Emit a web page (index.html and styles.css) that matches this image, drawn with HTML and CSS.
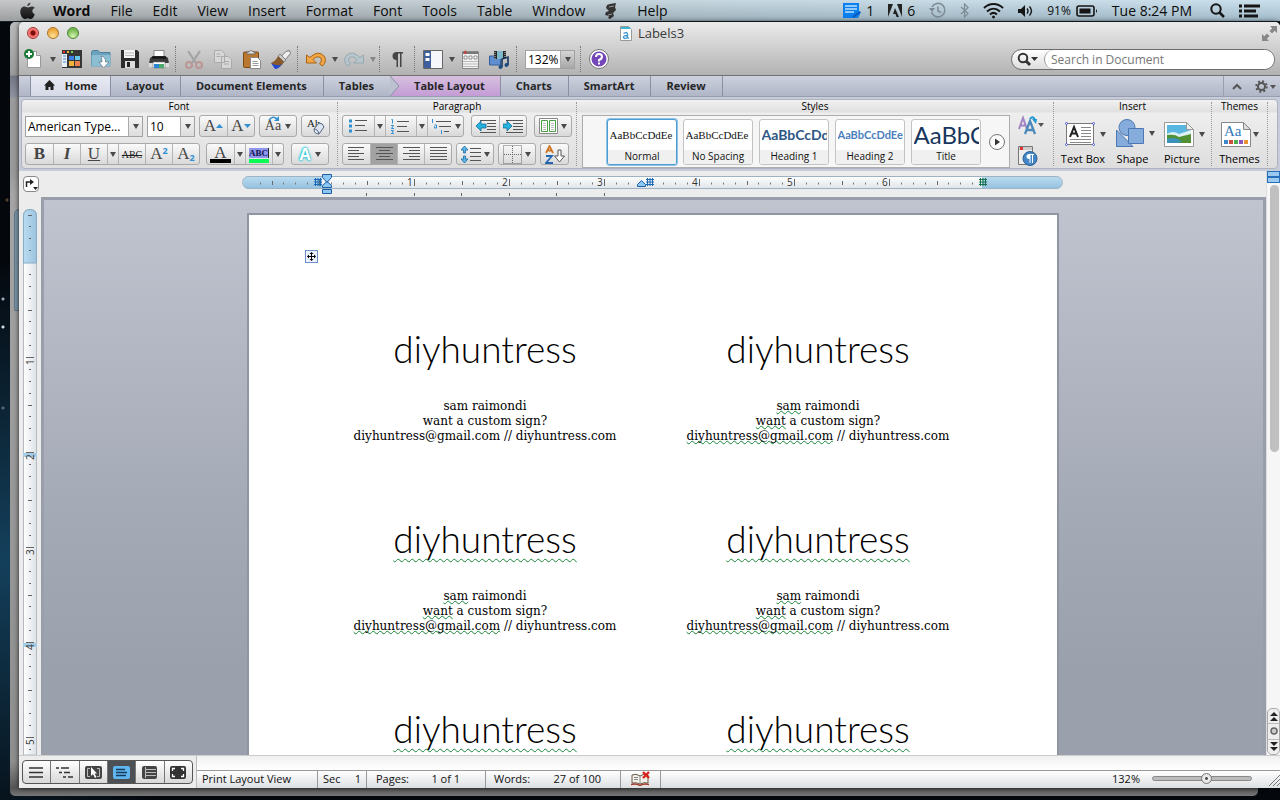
FILE: index.html
```html
<!DOCTYPE html>
<html lang="en">
<head>
<meta charset="utf-8">
<title>Labels3</title>
<link rel="stylesheet" href="styles.css">
</head>
<body>
<svg class="defs" aria-hidden="true">
  <symbol id="down" viewBox="0 0 6 5"><path d="M0 0h6L3 5z" fill="#4a4a4a"/></symbol>
  <symbol id="hash" viewBox="0 0 8 8"><path d="M1.500 0v8M4 0v8M6.500 0v8M0 1.500h8M0 4h8M0 6.500h8" stroke="currentColor" stroke-width="1"/></symbol>
</svg>

<header class="menubar">
  <svg class="apple" width="17" height="18" viewBox="0 0 17 18"><defs><linearGradient id="ap" x2="0" y2="1"><stop stop-color="#444"/><stop offset="1" stop-color="#111"/></linearGradient></defs><path fill="url(#ap)" d="M11.500.5c.1 1.700-1.400 3.500-3.200 3.600C8.100 2.400 9.800.7 11.500.5zM15 6.300c-2.600 1.500-2 4.800.8 5.900-.7 2-2.100 4.800-3.900 4.800-1.200 0-1.600-.8-3-.8s-1.900.8-3.100.8C3.500 17 1.300 13.200 1.300 9.800c0-3.400 2.200-5.200 4.300-5.200 1.400 0 2.300.8 3.500.8 1.100 0 2-.9 3.800-.9 1 0 2.100.5 2.900 1.500z"/></svg>
  <nav class="menus">
    <button class="app">Word</button><button>File</button><button>Edit</button><button>View</button><button>Insert</button><button>Format</button><button>Font</button><button>Tools</button><button>Table</button><button>Window</button>
    <button aria-label="Scripts"><svg width="12" height="16" viewBox="0 0 12 16"><path d="M5 1l6-1-1 4 1 3-3 3 1 3-4 3-2-1 1-2-4-1 1-3 3-1-3-3 1-3z" fill="#333"/><path d="M4 4l5-1M3 12l4-1" stroke="#999"/></svg></button>
    <button>Help</button>
  </nav>
  <div class="tray">
    <span class="stat"><svg width="18" height="17" viewBox="0 0 18 17"><path d="M0 1h16v8l2 1-3 6H0z" fill="#0a7ff0"/><path d="M2 4h12M2 7h12M2 10h9" stroke="#bfe2ff" stroke-width="1.500"/><path d="M10 15l7-5" stroke="#0a57b8" stroke-width="2"/></svg>1</span>
    <span class="stat"><svg width="14" height="14" viewBox="0 0 14 14"><path d="M0 0h5L0 13zM9 0h5v13zM7 4l4 9H8.500L7.500 10H5z" fill="#222"/></svg>6</span>
    <svg width="17" height="17" viewBox="0 0 17 17" fill="none" stroke="#7d8b93" stroke-width="1.500"><path d="M3 5a6.800 6.800 0 1 1-.5 5M9 4.500V9l3 1.500"/><path d="M0 6l3 4 3-4z" fill="#7d8b93" stroke="none"/></svg>
    <svg width="9" height="15" viewBox="0 0 9 15" fill="none" stroke="#7d8b93" stroke-width="1.200"><path d="M1 4l7 6.500L4.500 14V1L8 4.500 1 11"/></svg>
    <svg width="21" height="17" viewBox="0 0 21 17" fill="none" stroke="#151515" stroke-width="2"><path d="M1 6c5.500-5.300 13.500-5.300 19 0M4 9.500c4-3.800 9-3.800 13 0M7 12.500c2.200-2 4.800-2 7 0"/><circle cx="10.500" cy="15" r="1" fill="#151515" stroke-width="1"/></svg>
    <svg width="15" height="12" viewBox="0 0 15 12"><path d="M0 4h3l4-4v12L3 8H0z" fill="#151515"/><path d="M9 3.500q2 2.500 0 5M11.500 1.500q4 4.500 0 9" fill="none" stroke="#151515" stroke-width="1.400"/></svg>
    <span class="stat batt">91%<svg width="22" height="12" viewBox="0 0 22 12"><rect x="1" y="1" width="17" height="10" rx="2" fill="none" stroke="#151515" stroke-width="1.600"/><path d="M3.500 3.500h11v5h-11zM20 4q2 2 0 4z" fill="#151515"/></svg></span>
    <span class="clock">Tue 8:24 PM</span>
    <svg width="15" height="15" viewBox="0 0 15 15" fill="none" stroke="#151515" stroke-width="2"><circle cx="6" cy="6" r="4.700"/><path d="M9.500 9.500L14 14" stroke-width="2.500"/></svg>
    <svg width="21" height="14" viewBox="0 0 21 14" stroke="#151515" stroke-width="3"><path d="M0 2h3M5 2h16M0 7h3M5 7h12M0 12h3M5 12h14"/></svg>
  </div>
</header>

<div class="back-window" aria-hidden="true"><div class="back-ruler"></div></div>

<main class="window">
  <div class="chrome">
    <div class="titlebar">
      <div class="lights"><button class="light red" aria-label="Close"></button><button class="light amber" aria-label="Minimize"></button><button class="light green" aria-label="Zoom"></button></div>
      <h1 class="title"><svg width="12" height="15" viewBox="0 0 12 15"><path d="M.5.500h8l3 3v11H.5z" fill="#fff" stroke="#999"/><path d="M1 1h8l2 2H1z" fill="#3bb5cf"/><path d="M3.500 7.500q4-2 4 1v4M7.500 9.500q-4.500 0-4 2 .8 2 4 0l1.500 1" fill="none" stroke="#3a94cc" stroke-width="1.300"/></svg>Labels3</h1>
      <button class="full" aria-label="Full screen"><svg width="15" height="15" viewBox="0 0 15 15"><path d="M8 0h7v7l-2.300-2.300L10 7.500 7.500 5l2.700-2.700zM0 15V8l2.300 2.300L5 7.500 7.500 10l-2.700 2.700L7 15z" fill="#888"/></svg></button>
    </div>
    <div class="toolbar">
      <button class="tool" aria-label="New"><svg width="19" height="20" viewBox="0 0 19 20"><path d="M3.500 2.500h9l4 4v12h-13z" fill="#fff" stroke="#999"/><path d="M12.500 2.500v4h4" fill="#ddd" stroke="#999"/><circle cx="5" cy="5" r="5" fill="#187a35"/><path d="M5 2v6M2 5h6" stroke="#fff" stroke-width="2"/></svg></button><button class="drop" aria-label="New options"><svg width="6" height="5"><use href="#down"/></svg></button>
      <button class="tool" aria-label="Gallery"><svg width="20" height="19" viewBox="0 0 20 19"><path d="M0 0h20v18H0z" fill="#363636"/><path d="M0 4h5v13H0z" fill="#e8eef6"/><path d="M1 6h3M1 9h3M1 12h3" stroke="#4d87c8"/><path d="M1 1h2v2H1z" fill="#e33"/><path d="M5 1h2v2H5z" fill="#e9b83a"/><path d="M9 1h2v2H9z" fill="#7bd24a"/><path d="M7 6h5v4H7z" fill="#3b7fe8"/><path d="M13 6h5v4h-5z" fill="#67c8e8"/><path d="M7 11h5v5H7z" fill="#f0b43a"/><path d="M13 11h5v5h-5z" fill="#e98252"/></svg></button>
      <button class="tool" aria-label="Open"><svg width="20" height="19" viewBox="0 0 20 19"><path d="M.5 2.500q0-2 2-2H7l2 2h10V16H.5z" fill="#6ba3be" stroke="#4c8099"/><path d="M.5 5h19v11.500H.5z" fill="#8bbdd3"/><path d="M10 6q5 1 4.500 6H18l-5.500 6L8 12h3q0-4-1-6z" fill="#fff" stroke="#567" stroke-width=".6"/></svg></button>
      <button class="tool" aria-label="Save"><svg width="18" height="18" viewBox="0 0 18 18"><path d="M0 0h16l2 2v16H0z" fill="#2c2c2c"/><path d="M3 0h11v8H3z" fill="#f4f4f4"/><path d="M4 3h9M4 5.500h9" stroke="#bbb"/><path d="M4 11h10v7H4z" fill="#ddd"/><path d="M6 12h3v5H6z" fill="#222"/></svg></button>
      <button class="tool" aria-label="Print"><svg width="20" height="19" viewBox="0 0 20 19"><path d="M5 .5h10V8H5z" fill="#fff" stroke="#888"/><path d="M1 8l3-2h12l3 2 1 6H0z" fill="#3b3b3b"/><path d="M0 13h20v4H0z" fill="#ddd"/><path d="M3 7.500h14" stroke="#111" stroke-width="2"/><path d="M4 12h12v6H4z" fill="#fff" stroke="#777" stroke-width=".6"/><path d="M5 14h5v4H5z" fill="#2a86d0"/><path d="M10 14h5v4h-5z" fill="#4cab6b"/></svg></button>
      <i class="sep"></i>
      <button class="tool" aria-label="Cut" disabled><svg width="18" height="19" viewBox="0 0 18 19" fill="none"><path d="M3 1l8 12M15 1L7 13" stroke="#999" stroke-width="2"/><circle cx="4" cy="15" r="3" stroke="#bb8d8a" stroke-width="2"/><circle cx="14" cy="15" r="3" stroke="#bb8d8a" stroke-width="2"/></svg></button>
      <button class="tool" aria-label="Copy" disabled><svg width="18" height="19" viewBox="0 0 18 19" fill="#ddd" stroke="#a5a5a5"><path d="M.5.500h7l3 3v9H.5zM7.500 6.500h7l3 3v9h-10z"/><path d="M2.500 4h4M2.500 6.500h4M10 11.500h5M10 14h5" /></svg></button>
      <button class="tool" aria-label="Paste"><svg width="18" height="19" viewBox="0 0 18 19"><rect x=".5" y="2" width="15" height="15.500" rx="1" fill="#b9772f" stroke="#7c4a14"/><path d="M4 4V2h2q2-4 4 0h2v2z" fill="#ddd" stroke="#666" stroke-width=".8"/><path d="M7.500 7.500h7l3 3v8h-10z" fill="#fff" stroke="#888"/><path d="M9.500 11.500h5M9.500 13.500h6M9.500 15.500h6" stroke="#999"/></svg></button>
      <button class="tool" aria-label="Format painter"><svg width="20" height="19" viewBox="0 0 20 19"><path d="M15 1.500l3.500-1 1 3-5 6-4-3.500z" fill="#eee" stroke="#777"/><path d="M9 4l6 6-2 2-6-6z" fill="#ccc" stroke="#666" stroke-width=".7"/><path d="M7 6l6 6q-2 4-7 6l-6-5q5-2 7-7z" fill="#8a5a2c"/><path d="M0 13q7 4 11 1-3 5-7 5z" fill="#2447d0"/></svg></button>
      <i class="sep"></i>
      <button class="tool" aria-label="Undo"><svg width="20" height="15" viewBox="0 0 20 15"><path d="M.5 3L4 5.500Q12-2.500 18 4q3.500 5-1.500 10l-3-2q3-3 1.500-6-4-3-8 1.500L10.500 11H.5z" fill="#f1a545" stroke="#a86415"/></svg></button><button class="drop" aria-label="Undo options"><svg width="6" height="5"><use href="#down"/></svg></button>
      <button class="tool" aria-label="Redo" disabled><svg width="20" height="15" viewBox="0 0 20 15"><path d="M19.500 3L16 5.500Q8-2.500 2 4q-3.500 5 1.500 10l3-2q-3-3-1.500-6 4-3 8 1.500L9.500 11h10z" fill="#b4c8d0" stroke="#8ba3ad"/></svg></button><button class="drop dim" aria-label="Redo options" disabled><svg width="6" height="5"><use href="#down"/></svg></button>
      <i class="sep"></i>
      <button class="tool" aria-label="Show formatting"><svg width="11" height="15" viewBox="0 0 11 15"><path d="M4.500 8Q.5 8 .5 4T5 0h6v1.500H9.500V15H8V1.500H6V15H4.500z" fill="#454545"/></svg></button>
      <i class="sep"></i>
      <button class="tool" aria-label="Sidebar"><svg width="20" height="19" viewBox="0 0 20 19"><path d="M.5.500h19v18H.5z" fill="#f5f7fa" stroke="#666"/><path d="M1 1h7v17H1z" fill="#3f5e9c"/><path d="M2.500 3h4v3h-4zM2.500 8h4v3h-4z" fill="#fff"/></svg></button><button class="drop" aria-label="Sidebar options"><svg width="6" height="5"><use href="#down"/></svg></button>
      <button class="tool" aria-label="Toolbox"><svg width="17" height="19" viewBox="0 0 17 19"><path d="M.5 1.500h16v17H.5z" fill="#f2f2f2" stroke="#888"/><path d="M1 2h15v2H1z" fill="#777"/><path d="M3 0l2 3-3 1z" fill="#d33"/><path d="M2 6h3v3H2zM7 6h3v3H7zM12 6h3v3h-3z" fill="#fff" stroke="#777" stroke-width=".8"/><path d="M1 11.500h15M1 14h15M1 16.500h15" stroke="#bbb"/></svg></button>
      <button class="tool" aria-label="Media browser"><svg width="21" height="19" viewBox="0 0 21 19"><path d="M.5 6h11v9H.5z" fill="#5f8fd0" stroke="#345e9c"/><path d="M5 1h12v8H5z" fill="#252525"/><path d="M8 1h6v8H8z" fill="#7fb8ca"/><path d="M6 2v7M16 2v7" stroke="#ddd" stroke-dasharray="1 1"/><path d="M13 17V9l6-2v8" fill="none" stroke="#16365c" stroke-width="1.600"/><circle cx="11.500" cy="17" r="2" fill="#1f4a80"/><circle cx="17.500" cy="15" r="2" fill="#1f4a80"/></svg></button>
      <i class="sep"></i>
      <span class="combo zoom"><select aria-label="Zoom"><option>132%</option></select><span class="arrow"><svg width="6" height="5"><use href="#down"/></svg></span></span>
      <i class="sep"></i>
      <button class="tool" aria-label="Help"><svg width="20" height="20" viewBox="0 0 20 20"><circle cx="10" cy="10" r="8.500" fill="#7546b8" stroke="#fff" stroke-width="2"/><circle cx="10" cy="10" r="9.500" fill="none" stroke="#777"/><path d="M7 8q0-3 3-3t3 2.500-3 3.500v1.500M10 13.500v2" fill="none" stroke="#fff" stroke-width="2"/></svg></button>
      <label class="search"><svg width="21" height="15" viewBox="0 0 21 15" fill="none" stroke="#333" stroke-width="2"><circle cx="6" cy="6" r="4.300"/><path d="M9 9l4 4" stroke-width="3"/><path d="M14 5h7l-3.500 4z" fill="#333" stroke="none"/></svg><input type="text" placeholder="Search in Document" aria-label="Search in Document"></label>
    </div>
  </div>

  <nav class="tabs">
    <button class="tab home"><svg width="11" height="10" viewBox="0 0 11 10"><path d="M5.500 0L11 5.500H9.500V10h-3V7h-2v3h-3V5.500H0z" fill="#222"/></svg>Home</button>
    <button class="tab">Layout</button><button class="tab">Document Elements</button><button class="tab tables">Tables</button>
    <button class="tab context"><svg class="notch" width="11" height="20" viewBox="0 0 11 20"><path d="M0 0l9 10-9 10z" fill="#bcc1d0"/><path d="M0 0l9 10-9 10" fill="none" stroke="#8b8fa3"/></svg>Table Layout</button>
    <button class="tab">Charts</button><button class="tab">SmartArt</button><button class="tab">Review</button>
    <div class="tab-tools"><button aria-label="Collapse ribbon"><svg width="10" height="7" viewBox="0 0 10 7"><path d="M1 6l4-4 4 4" fill="none" stroke="#555" stroke-width="2"/></svg></button><button aria-label="Ribbon settings"><svg width="21" height="13" viewBox="0 0 21 13"><circle cx="6.500" cy="6.500" r="3.500" fill="none" stroke="#555" stroke-width="2"/><circle cx="6.500" cy="6.500" r="5.200" fill="none" stroke="#555" stroke-width="2" stroke-dasharray="2 2.080"/><path d="M15 5h6l-3 4z" fill="#555"/></svg></button></div>
  </nav>

  <section class="ribbon">
    <div class="panel">
      <div class="group font">
        <h2>Font</h2>
        <div class="row">
          <span class="combo family"><select aria-label="Font family"><option>American Type...</option></select><span class="arrow"><svg width="6" height="5"><use href="#down"/></svg></span></span>
          <span class="combo size"><select aria-label="Font size"><option>10</option></select><span class="arrow"><svg width="6" height="5"><use href="#down"/></svg></span></span>
          <span class="set"><button class="c28 serif" aria-label="Grow font">A<svg width="7" height="4" viewBox="0 0 7 4"><path d="M0 4h7L3.500 0z" fill="#2f8fd0"/></svg></button><button class="c28 serif" aria-label="Shrink font">A<svg width="7" height="4" viewBox="0 0 7 4"><path d="M0 0h7L3.500 4z" fill="#2f8fd0"/></svg></button></span>
          <span class="set"><button class="c38 serif" aria-label="Change case"><span class="case">Aa<svg class="swirl" width="12" height="5" viewBox="0 0 12 5"><path d="M1 4q4-5 8-1" fill="none" stroke="#2f8fd0" stroke-width="1.500"/><path d="M11 0v5H6z" fill="#2f8fd0"/></svg></span><svg width="6" height="5"><use href="#down"/></svg></button></span>
          <span class="set"><button class="c28" aria-label="Clear formatting"><svg width="18" height="19" viewBox="0 0 18 19"><text x="0" y="10" font-size="11" font-family="Liberation Serif" fill="#222">Ab</text><path d="M7 12l5-6q4 0 5 4l-5 7q-5 0-5-5z" fill="#dce4f2" stroke="#55657d"/><path d="M7 12q4 0 5 5" fill="none" stroke="#55657d"/></svg></button></span>
        </div>
        <div class="row">
          <span class="set"><button class="c28 serif bold">B</button><button class="c28 serif ital">I</button><button class="c28 serif under">U</button><button class="c11" aria-label="Underline options"><svg width="6" height="5"><use href="#down"/></svg></button><button class="c28 strike">ABC</button><button class="c28 serif">A<sup>2</sup></button><button class="c28 serif">A<sub>2</sub></button></span>
          <span class="set gap"><button class="c28 serif ink black">A</button><button class="c11" aria-label="Font color options"><svg width="6" height="5"><use href="#down"/></svg></button><button class="c28 ink lime"><span class="hl">ABC</span></button><button class="c11" aria-label="Highlight options"><svg width="6" height="5"><use href="#down"/></svg></button></span>
          <span class="set glowset"><button class="c38 glow"><b>A</b><svg width="6" height="5"><use href="#down"/></svg></button></span>
        </div>
      </div>

      <div class="group para">
        <h2>Paragraph</h2>
        <div class="row">
          <span class="set">
            <button class="c32" aria-label="Bullets"><svg width="20" height="14" viewBox="0 0 20 14"><path d="M0 2h3M0 7h3M0 12h3" stroke="#2f8fd0" stroke-width="3"/><path d="M6 1.500h12M6 6.500h10M6 11.500h12" stroke="#555"/></svg></button><button class="c11" aria-label="Bullet options"><svg width="6" height="5"><use href="#down"/></svg></button>
            <button class="c32" aria-label="Numbering"><svg width="20" height="15" viewBox="0 0 20 15"><path d="M.5.500h1v4M0 6.500h2.500L.5 9.500H3M0 11.500h2.500l-1 1.500 1 1.500H0" fill="none" stroke="#2f8fd0"/><path d="M6 2.500h12M6 7.500h10M6 12.500h12" stroke="#555"/></svg></button><button class="c11" aria-label="Numbering options"><svg width="6" height="5"><use href="#down"/></svg></button>
            <button class="c38" aria-label="Multilevel list"><svg width="21" height="15" viewBox="0 0 21 15"><path d="M1.500 0v4M3.500 6h2v3h-2V7.500M10.500 11v4" fill="none" stroke="#2f8fd0"/><path d="M5 2.500h15M8 7.500h12M13 12.500h5" stroke="#555"/></svg><svg width="6" height="5"><use href="#down"/></svg></button>
          </span>
          <span class="set gap"><button class="c28" aria-label="Decrease indent"><svg width="20" height="14" viewBox="0 0 20 14"><path d="M4 1.500h16M11 4.500h9M11 7.500h9M11 10.500h9M4 13.500h16" stroke="#555"/><path d="M0 7l5-5v3h5v4H5v3z" fill="#25b4dd" stroke="#116b99" stroke-width=".8"/></svg></button><button class="c28" aria-label="Increase indent"><svg width="20" height="14" viewBox="0 0 20 14"><path d="M3 1.500h17M10 4.500h10M10 7.500h10M10 10.500h10M3 13.500h17" stroke="#555"/><path d="M9 7L4 2v3H0v4h4v3z" fill="#25b4dd" stroke="#116b99" stroke-width=".8"/></svg></button></span>
          <span class="set gap"><button class="c38" aria-label="Columns"><svg width="19" height="16" viewBox="0 0 19 16"><path d="M.5.500h18v15H.5z" fill="#fff" stroke="#888"/><path d="M2.500 2.500h6v11h-6zM10.500 2.500h6v11h-6z" fill="#fff" stroke="#45a045"/><path d="M4 5.500h3M4 7.500h3M4 9.500h3M4 11.500h3M12 5.500h3M12 7.500h3M12 9.500h3M12 11.500h3" stroke="#bbb"/></svg><svg width="6" height="5"><use href="#down"/></svg></button></span>
        </div>
        <div class="row">
          <span class="set"><button class="c28" aria-label="Align left"><svg width="17" height="14" viewBox="0 0 17 14"><path d="M0 .5h16M0 3.500h11M0 6.500h16M0 9.500h11M0 12.500h16" stroke="#555"/></svg></button><button class="c28 on" aria-label="Center"><svg width="17" height="14" viewBox="0 0 17 14"><path d="M0 .5h17M3 3.500h11M0 6.500h17M3 9.500h11M0 12.500h17" stroke="#555"/></svg></button><button class="c28" aria-label="Align right"><svg width="17" height="14" viewBox="0 0 17 14"><path d="M0 .5h17M6 3.500h11M0 6.500h17M6 9.500h11M0 12.500h17" stroke="#555"/></svg></button><button class="c28" aria-label="Justify"><svg width="17" height="14" viewBox="0 0 17 14"><path d="M0 .5h17M0 3.500h17M0 6.500h17M0 9.500h17M0 12.500h17" stroke="#555"/></svg></button></span>
          <span class="set"><button class="c38" aria-label="Line spacing"><svg width="20" height="17" viewBox="0 0 20 17"><path d="M9 2.500h11M9 6.500h11M9 10.500h11M9 14.500h11" stroke="#555"/><path d="M3.500 0L7 4H4.500v3h-2V4H0zM3.500 17L7 13H4.500v-3h-2v3H0z" fill="#5db4e5" stroke="#1b6ca5" stroke-width=".8"/></svg><svg width="6" height="5"><use href="#down"/></svg></button></span>
          <span class="set"><button class="c38" aria-label="Borders"><svg width="19" height="19" viewBox="0 0 19 19"><path d="M.5.500h18v18H.5zM9.500 1v17M1 9.500h17" fill="none" stroke="#666" stroke-dasharray="1 1"/></svg><svg width="6" height="5"><use href="#down"/></svg></button></span>
          <span class="set"><button class="c28" aria-label="Sort"><svg width="20" height="19" viewBox="0 0 20 19"><path d="M1 8l3.500-7L8 8M2.500 5.500h4" fill="none" stroke="#cf7828" stroke-width="1.800"/><path d="M1 11h6l-6 7h7" fill="none" stroke="#2467b0" stroke-width="1.800"/><path d="M13 5h3v6h3.500L14.500 17l-5-6H13z" fill="#fff" stroke="#555"/></svg></button></span>
        </div>
      </div>

      <div class="group styles">
        <h2>Styles</h2>
        <div class="styles-body">
          <div class="gallery">
            <button class="style chosen"><span class="demo normal">AaBbCcDdEe</span><span class="name">Normal</span></button>
            <button class="style"><span class="demo normal">AaBbCcDdEe</span><span class="name">No Spacing</span></button>
            <button class="style"><span class="demo h1">AaBbCcDd</span><span class="name">Heading 1</span></button>
            <button class="style"><span class="demo h2">AaBbCcDdEe</span><span class="name">Heading 2</span></button>
            <button class="style"><span class="demo ttl">AaBbC</span><span class="name">Title</span></button>
            <button class="play" aria-label="More styles"><svg width="16" height="16" viewBox="0 0 16 16"><circle cx="8" cy="8" r="7.500" fill="#fcfcfc" stroke="#777"/><path d="M6 4.500v7L11 8z" fill="#333"/></svg></button>
          </div>
          <div class="style-tools">
            <button aria-label="Change styles"><svg width="26" height="20" viewBox="0 0 26 20"><path d="M1 14L5 3l4 11M2.500 10.500h5" fill="none" stroke="#a283c4" stroke-width="2"/><path d="M7 19L12 6l5 13M8.500 15h7" fill="none" stroke="#4d88bb" stroke-width="2.300"/><path d="M12 4q3-4 5 1" fill="none" stroke="#2097d2" stroke-width="2"/><path d="M14 4h5l-1 5z" fill="#2097d2"/><path d="M20 8h6l-3 4z" fill="#555"/></svg></button>
            <button aria-label="Styles pane"><svg width="20" height="20" viewBox="0 0 20 20"><path d="M.5.500h14v18H.5z" fill="#eee" stroke="#777"/><path d="M1 1h13v3H1z" fill="#ccc"/><path d="M2 1h3v3H2z" fill="#d33"/><circle cx="12" cy="12.500" r="7" fill="#4286c6" stroke="#2c5f94"/><path d="M11.500 13q-3 0-3-2.500t3-2.500H16v1h-1v8h-1V9h-1.500v8h-1z" fill="#fff"/></svg></button>
          </div>
        </div>
      </div>

      <div class="group insert">
        <h2>Insert</h2>
        <div class="bigs">
          <button class="big"><span><svg width="30" height="25" viewBox="0 0 30 25"><path d="M1.500 1.500h27v21h-27z" fill="#fff" stroke="#777"/><path d="M5 15L9 5l4 10M6.500 11.500h5" fill="none" stroke="#222" stroke-width="2"/><path d="M16 5.500h10M16 8.500h10M16 11.500h10M16 14.500h10M5 17.500h21M5 20.500h21" stroke="#888"/><g fill="#fff" stroke="#4358e0"><circle cx="1.500" cy="1.500" r="1"/><circle cx="28.500" cy="1.500" r="1"/><circle cx="1.500" cy="22.500" r="1"/><circle cx="28.500" cy="22.500" r="1"/></g></svg><svg width="6" height="5"><use href="#down"/></svg></span>Text Box</button>
          <button class="big"><span><svg width="29" height="28" viewBox="0 0 29 28" fill="#86acdb" stroke="#4b77b2"><circle cx="12" cy="8.500" r="8"/><path d="M1.500 11v16.500H18z"/><path d="M13.500 9.500h15v15h-15z"/></svg><svg width="6" height="5"><use href="#down"/></svg></span>Shape</button>
          <button class="big"><span><svg width="30" height="25" viewBox="0 0 30 25"><path d="M.5.500h22l7 7v17H.5z" fill="#fff" stroke="#999"/><path d="M3 3h20l4 5v13H3z" fill="#58b6e0"/><path d="M3 12q6-4 12 0l12-4v5l-10 4H3z" fill="#dcf0ee"/><path d="M3 13q8-1 12 2l12-3v9H3z" fill="#4f9134"/><path d="M3 17q9-3 15 3l-5 1H3z" fill="#3b92b9"/><path d="M22.500.5v7h7z" fill="#eee" stroke="#999"/></svg><svg width="6" height="5"><use href="#down"/></svg></span>Picture</button>
        </div>
      </div>

      <div class="group themes">
        <h2>Themes</h2>
        <div class="bigs">
          <button class="big"><span><svg width="30" height="25" viewBox="0 0 30 25"><path d="M.5.500h22l7 7v17H.5z" fill="#fff" stroke="#888"/><path d="M22.500.5v7h7z" fill="#ddd" stroke="#888"/><text x="3" y="14" font-size="15" font-family="Liberation Serif" fill="#3478b8">Aa</text><path d="M3 18h4v4H3z" fill="#3f86c8"/><path d="M8 18h4v4H8z" fill="#c8503f"/><path d="M13 18h4v4h-4z" fill="#4fae50"/><path d="M18 18h4v4h-4z" fill="#8b54bd"/><path d="M23 18h4v4h-4z" fill="#e89236"/></svg><svg width="6" height="5"><use href="#down"/></svg></span>Themes</button>
        </div>
      </div>
      <div class="group end"></div>
    </div>
  </section>

  <section class="work">
    <button class="tabstop" aria-label="Tab stop"><svg width="14" height="14" viewBox="0 0 14 14"><path d="M2.500 10V5H7" fill="none" stroke="#222" stroke-width="1.500"/><path d="M6 2l4 3-4 3zM9 10h5l-2.500 3z" fill="#222"/></svg></button>
    <div class="hruler">
      <svg width="821" height="26" viewBox="0 0 821 26">
        <defs>
          <linearGradient id="hg" x2="0" y2="1"><stop stop-color="#fff"/><stop offset="1" stop-color="#dfe4e8"/></linearGradient>
          <linearGradient id="hb" x2="0" y2="1"><stop stop-color="#bcdcf0"/><stop offset="1" stop-color="#93c0df"/></linearGradient>
          <pattern id="ht" x="77" width="95" height="13" y="5" patternUnits="userSpaceOnUse"><path d="M.5 3v7M48.500 5v4" stroke="#666"/><path d="M12 7.500h1M24 7.500h1M36 7.500h1M59 7.500h1M71 7.500h1M83 7.500h1" stroke="#777" stroke-width="2"/></pattern>
          <clipPath id="hc"><rect x="1" y="5" width="819" height="13" rx="6"/></clipPath>
        </defs>
        <g clip-path="url(#hc)"><path d="M0 5h821v13H0z" fill="url(#hg)"/><path d="M0 5h80v13H0zM740 5h81v13h-81z" fill="url(#hb)"/></g>
        <path d="M8 5h728v13H8z" fill="url(#ht)"/>
        <rect x=".5" y="5.500" width="820" height="12" rx="6" fill="none" stroke="#9db3c4"/>
        <g class="nums"><text x="165" y="15">1</text><text x="260" y="15">2</text><text x="355" y="15">3</text><text x="450" y="15">4</text><text x="545" y="15">5</text><text x="640" y="15">6</text></g>
        <path d="M124.500 22v3M172.500 22v3M219.500 22v3M267.500 22v3M314.500 22v3M362.500 22v3" stroke="#666"/>
        <g fill="#8cc8f2" stroke="#1d5ea6"><path d="M80.500 3.500h9v3l-4.500 5-4.500-5zM80.500 16.500v-2l4.500-4 4.500 4v2zM80.500 18.500h9v4h-9z"/><path d="M395.500 15.500v-2l4-4 4 4v2z"/></g>
        <g color="#1b69b4"><use href="#hash" x="72" y="7" width="8" height="8"/><use href="#hash" x="404" y="7" width="8" height="8"/></g><g color="#17724f"><use href="#hash" x="737" y="7" width="8" height="8"/></g>
      </svg>
    </div>
    <div class="vscroll"><div class="split"></div><div class="track"><div class="thumb"></div></div>
      <div class="pager"><button aria-label="Previous page"><svg width="8" height="9" viewBox="0 0 8 9"><path d="M0 4h8L4 0zM0 9h8L4 5z" fill="#222"/></svg></button><button aria-label="Browse object"><svg width="8" height="8" viewBox="0 0 8 8"><circle cx="4" cy="4" r="3" fill="#ccc" stroke="#666" stroke-width="1.500"/></svg></button><button aria-label="Next page"><svg width="8" height="9" viewBox="0 0 8 9"><path d="M0 0h8L4 4zM0 5h8L4 9z" fill="#222"/></svg></button></div>
    </div>
    <div class="vruler">
      <svg width="14" height="546">
        <defs>
          <linearGradient id="vg"><stop stop-color="#fff"/><stop offset="1" stop-color="#dde2e6"/></linearGradient>
          <linearGradient id="vb"><stop stop-color="#b9dcf2"/><stop offset="1" stop-color="#9cc3dd"/></linearGradient>
          <pattern id="vt" y="53" width="14" height="95" patternUnits="userSpaceOnUse"><path d="M3 .5h8M5 48.500h4" stroke="#666"/><path d="M6 12.500h2M6 24.500h2M6 36.500h2M6 59.500h2M6 71.500h2M6 83.500h2" stroke="#666"/></pattern>
        </defs>
        <path d="M.5 546V7q0-6.500 6.500-6.500T13.500 7v539z" fill="url(#vg)" stroke="#b4bac0"/>
        <path d="M.5 54V7q0-6.500 6.500-6.500T13.500 7v47z" fill="url(#vb)" stroke="#86acc6"/>
        <path d="M0 244h14v4H0zM0 434h14v4H0z" fill="#a5cde8"/>
        <path d="M0 4h14v48H0zM0 56h14v490H0z" fill="url(#vt)"/>
        <g class="nums"><text transform="translate(11 156) rotate(-90)">1</text><text transform="translate(11 251) rotate(-90)">2</text><text transform="translate(11 346) rotate(-90)">3</text><text transform="translate(11 441) rotate(-90)">4</text><text transform="translate(11 536) rotate(-90)">5</text></g>
      </svg>
    </div>
    <div class="canvas">
      <article class="page">
        <button class="move" aria-label="Move table"><svg width="9" height="9" viewBox="0 0 9 9"><path d="M4.500 1v7M1 4.500h7" stroke="#000"/><path d="M4.500 0l2 2h-4zM4.500 9l2-2h-4zM0 4.500l2-2v4zM9 4.500l-2-2v4z"/></svg></button>
        <div class="labels">
          <div class="label"><p class="brand">diyhuntress</p><p>sam raimondi</p><p>want a custom sign?</p><p>diyhuntress@gmail.com // diyhuntress.com</p></div>
          <div class="label"><p class="brand">diyhuntress</p><p><u>sam</u> raimondi</p><p><u>want</u> a custom sign?</p><p><u>diyhuntress@gmail.com</u> // diyhuntress.com</p></div>
          <div class="label"><p class="brand"><u>diyhuntress</u></p><p><u>sam</u> raimondi</p><p><u>want</u> a custom sign?</p><p><u>diyhuntress@gmail.com</u> // diyhuntress.com</p></div>
          <div class="label"><p class="brand"><u>diyhuntress</u></p><p><u>sam</u> raimondi</p><p><u>want</u> a custom sign?</p><p><u>diyhuntress@gmail.com</u> // diyhuntress.com</p></div>
          <div class="label"><p class="brand"><u>diyhuntress</u></p></div>
          <div class="label"><p class="brand"><u>diyhuntress</u></p></div>
        </div>
      </article>
    </div>
  </section>

  <footer class="footer">
    <div class="views">
      <div class="viewset">
        <button aria-label="Draft"><svg width="15" height="11" viewBox="0 0 15 11"><path d="M0 1h14M0 5.500h14M0 10h14" stroke="#333" stroke-width="1.500"/></svg></button>
        <button aria-label="Outline"><svg width="17" height="11" viewBox="0 0 17 11"><path d="M0 1h3M5 1h8M3 5.500h3M8 5.500h6M7 10h3M12 10h5" stroke="#333" stroke-width="1.500"/></svg></button>
        <button aria-label="Publishing"><svg width="17" height="13" viewBox="0 0 17 13"><rect width="17" height="13" rx="2" fill="#444"/><path d="M5 2.500H2.500v8H5M12 2.500h2.500v8H12" fill="none" stroke="#bbb"/><path d="M6 1v9l2-2 2 4 1.500-1-2-3.500H12z" fill="#fff"/></svg></button>
        <button class="on" aria-label="Print layout"><svg width="17" height="13" viewBox="0 0 17 13"><rect width="17" height="13" rx="2" fill="#5fb5ee"/><path d="M3 3.500h9M3 6.500h11M3 9.500h10" stroke="#153a5c" stroke-width="1.300"/></svg></button>
        <button aria-label="Notebook"><svg width="15" height="13" viewBox="0 0 15 13"><rect width="15" height="13" rx="2" fill="#444"/><path d="M3 3.500h11M3 6.500h11M3 9.500h11M3.500 1v11" stroke="#bbb"/></svg></button>
        <button aria-label="Full screen"><svg width="16" height="13" viewBox="0 0 16 13"><rect width="16" height="13" rx="2" fill="#333"/><path d="M2.500 5V2.500H5M11 2.500h2.500V5M13.500 8v2.500H11M5 10.500H2.500V8" fill="none" stroke="#fff" stroke-width="1.300"/></svg></button>
      </div>
    </div>
    <div class="status">
      <div class="hscroll"></div>
      <div class="cells">
        <span class="cell layout">Print Layout View</span>
        <span class="cell sec"><span>Sec</span><span>1</span></span>
        <span class="cell pages"><span>Pages:</span><span>1 of 1</span></span>
        <span class="cell words"><span>Words:</span><span>27 of 100</span></span>
        <span class="cell spell"><svg width="19" height="15" viewBox="0 0 19 15"><path d="M1 4q4-2 8 1 4-3 8-1v8q-4-1-8 1-4-2-8-1z" fill="#f1efe9" stroke="#6b5a48"/><path d="M0 13.500q5-1.500 9 1 4-2.500 9-1" fill="none" stroke="#a63c2d" stroke-width="1.500"/><path d="M9 5v8M3 6.500h4M3 8.500h4" stroke="#888"/><path d="M12 1l6 6M18 1l-6 6" stroke="#d8221c" stroke-width="2.400"/></svg></span>
        <span class="zoomer"><label for="zoom">132%</label><input id="zoom" type="range" min="0" max="100" value="55"><svg width="11" height="11" viewBox="0 0 11 11"><path d="M0 11L11 0M4 11l7-7M8 11l3-3" stroke="#777"/></svg></span>
      </div>
    </div>
  </footer>
</main>
</body>
</html>
```
FILE: styles.css
```css
* { box-sizing: border-box; }
html, body { height: 100%; }
body {
  margin: 0;
  overflow: hidden;
  position: relative;
  font: 11px "Open Sans", "Noto Sans", sans-serif;
  color: #111;
  background:
    radial-gradient(circle at 3px 299px, #9ab 0 1px, transparent 2px),
    radial-gradient(circle at 3px 327px, #cde 0 1px, transparent 2px),
    radial-gradient(circle at 7px 200px, #543 0 1px, transparent 2px),
    radial-gradient(circle at 3px 408px, #567 0 1px, transparent 2px),
    radial-gradient(ellipse 260px 300px at 0 560px, #14405c, transparent),
    #04080d;
}
button { border: 0; padding: 0; margin: 0; background: none; font: inherit; color: inherit; }
button, .row, .set { display: flex; align-items: center; }
button { justify-content: center; }
h1, h2, p { margin: 0; font-weight: normal; }
svg { display: block; flex: none; }
.defs { position: absolute; width: 0; height: 0; }

/* Menu bar */
.menubar {
  height: 22px;
  display: flex;
  align-items: center;
  padding: 0 20px 0 19px;
  font-size: 14px;
  color: #0c0c0c;
  border-bottom: 1px solid #152028;
  background: linear-gradient(rgba(255,255,255,.25), rgba(0,0,0,.13)), linear-gradient(90deg, #b3b6b7, #b2bec5 30%, #b4ccd9 60%, #b9d5e6);
}
.menus { display: flex; gap: 20px; margin-left: 17px; }
.app { font-weight: bold; }
.tray { display: flex; align-items: center; gap: 14px; margin-left: auto; }
.stat { display: flex; align-items: center; gap: 5px; }
.batt { font-size: 12px; }
.clock { margin-right: 4px; }

/* Windows */
.back-window {
  position: absolute;
  top: 22px; left: 10px; right: 22px; bottom: 4px;
  border-radius: 5px;
  padding: 187px 0 0 4px;
  background: linear-gradient(#bbb, #999 53px, #737784 54px, #8d92a0 75px, #9b9b9b 76px, #999 150px, #a5a5a5 170px, #8e8e8e 740px, #555 766px, #777);
}
.back-ruler { width: 12px; height: 102px; border: 1px solid #60788a; border-radius: 5px 0 0 0; background: #7d96a8; }
.window {
  position: absolute;
  top: 22px; left: 19px; right: 0; bottom: 12px;
  display: flex;
  flex-direction: column;
  background: #ececec;
  border-radius: 5px 5px 0 0;
  box-shadow: 0 0 5px rgba(0,0,0,.8);
  overflow: hidden;
}
.chrome { height: 54px; background: linear-gradient(#ebebeb, #cfcfcf 50%, #b2b2b2); border-bottom: 1px solid #717171; }
.titlebar { height: 22px; display: grid; grid-template-columns: 1fr auto 1fr; align-items: center; padding: 0 3px 0 8px; }
.lights { display: flex; gap: 8px; }
.light { width: 12px; height: 12px; border: 1px solid #8b6a3a; border-radius: 50%; }
.red { border-color: #a2332f; background: radial-gradient(circle at 50% 50%, #7c0d0d 0 2px, #f0605c 3px, #fbb); }
.amber { background: radial-gradient(circle at 50% 85%, #ffe39a, #eda83c 70%); border-color: #a8722a; }
.green { background: radial-gradient(circle at 50% 85%, #d8f7b0, #76b951 70%); border-color: #4c813a; }
.title { display: flex; align-items: center; gap: 6px; font-size: 13px; color: #3a3a3a; }
.full { justify-self: end; }

/* Standard toolbar */
.toolbar { height: 30px; display: flex; align-items: center; padding-right: 5px; }
.tool { width: 29px; height: 24px; flex: none; }
.tool:disabled { opacity: .8; }
.drop { width: 9px; height: 24px; flex: none; }
.dim { opacity: .5; }
.sep { width: 0; height: 26px; margin: 0 3px 0 2px; border-left: 1px dotted #777; }
.combo { display: flex; height: 21px; background: #fff; border: 1px solid #a2a2a2; }
.combo select { appearance: none; border: 0; margin: 0; padding: 0 2px; flex: 1; min-width: 0; background: none; font: inherit; font-size: 12px; color: #000; }
.arrow { width: 14px; display: flex; align-items: center; justify-content: center; background: linear-gradient(#f4f4f4, #ddd); border-left: 1px solid #aaa; }
.zoom { width: 50px; height: 19px; margin: 0 3px 0 5px; }
.zoom .arrow { background: linear-gradient(#d5d5d5, #a8a8a8); }
.search { margin-left: auto; width: 264px; height: 21px; display: flex; align-items: center; gap: 6px; padding-left: 5px; border: 1px solid #6c6c6c; border-radius: 11px; background: linear-gradient(#fff, #ddd); }
.search input { flex: 1; min-width: 0; height: 19px; border: 0; border-left: 1px solid #999; border-radius: 10px; padding: 0 6px; background: #fff; font: inherit; font-size: 12px; color: #333; outline: 0; }
.search input::placeholder { color: #777; opacity: 1; }

/* Ribbon tabs */
.tabs { height: 20px; display: flex; padding-left: 11px; background: linear-gradient(#cdd1dd, #b0b6c7); font-weight: bold; color: #262626; }
.tab { padding: 0 16px 2px 15px; border-right: 1px solid #8b8fa3; }
.home { gap: 10px; padding: 0 12px 2px; min-width: 81px; border-left: 1px solid #8b8fa3; background: linear-gradient(#e9ebf3, #d5d9e6); }
.tables { border-right: 0; }
.context { position: relative; padding: 0 15px 2px 24px; background: linear-gradient(#d7c0e0, #c39cd5); }
.notch { position: absolute; left: 0; top: 0; }
.tab-tools { display: flex; align-items: center; gap: 13px; margin-left: auto; padding: 0 4px 0 8px; border-left: 1px solid #9a9eae; }

/* Ribbon */
.ribbon { padding: 2px 2px 2px; background: #c6ccda; border-top: 1px solid #989eb0; }
.panel { height: 70px; display: flex; border: 1px solid #aeb2bd; border-radius: 4px; background: linear-gradient(#f1f1f1, #e0e0e0 12px, #eee 13px, #dedede); }
.group { position: relative; border-right: 1px dotted #999; padding: 0 4px; margin-top: 2px; margin-bottom: 2px; }
.group h2 { font-size: 10px; line-height: 9px; height: 13px; text-align: center; color: #000; }
.row { height: 22px; gap: 4px; margin-bottom: 6px; }
.font { width: 316px; padding-left: 3px; }
.para { width: 239px; }
.family { width: 118px; }
.size { width: 48px; }
.set { height: 22px; border: 1px solid #aaa; border-radius: 3px; background: linear-gradient(#fafafa, #d9d9d9); }
.gap { margin-left: 2px; }
.glowset { margin-left: 3px; }
.set button { height: 20px; border-left: 1px solid #b4b4b4; gap: 4px; color: #454545; }
.set button:first-child { border-left: 0; }
.set .c11 { width: 11px; }
.set .c28 { width: 27px; gap: 0; }
.set .c32 { width: 31px; }
.set .c38 { width: 36px; }
.para .gap { margin-left: 3px; }
.para .c38 { gap: 3px; }
.set .on { background: #a2a2a2; }
.set .serif { font: 17px/18px "Liberation Serif", serif; }
.set .bold { font-weight: bold; }
.set .ital { font-style: italic; font-weight: bold; }
.set .under { text-decoration: underline; }
.set .strike { font: 10px "Liberation Serif", serif; text-decoration: line-through; color: #222; }
.set sup, .set sub { font: bold 9px "Open Sans", sans-serif; color: #2f8fd0; }
.set sup { align-self: flex-start; }
.set sub { align-self: flex-end; }
.case { position: relative; font-size: 14px; }
.swirl { position: absolute; left: 3px; top: -1px; }
.ink::after { content: ""; position: absolute; left: 3px; right: 3px; bottom: 1px; height: 4px; }
.set .ink { position: relative; padding-bottom: 3px; }
.black::after { background: #000; }
.lime::after { background: #0bfb55; }
.hl { font: bold 9px/10px "Liberation Serif", serif; color: #15154f; background: #8d96ec; border-right: 1px solid #222; }
.glow b { font-size: 16px; line-height: 18px; color: #fff; text-shadow: 0 0 2px #19c7d8, 0 0 2px #19c7d8, 0 0 3px #19c7d8; }

/* Styles gallery */
.styles { flex: 1; padding: 0 5px; }
.styles-body { display: flex; gap: 8px; }
.gallery { flex: 1; height: 53px; display: flex; align-items: center; gap: 6px; padding: 0 4px 0 24px; border: 1px solid #adadad; background: #f6f6f6; }
.style { width: 70px; height: 46px; flex-direction: column; border: 1px solid #c3c3c3; border-radius: 3px; background: #fff; overflow: hidden; }
.chosen { border-color: #4d9bd0; box-shadow: 0 0 0 1px #8cc3e6; }
.demo { width: 65px; flex: 1; overflow: hidden; white-space: nowrap; text-align: left; line-height: 30px; height: 30px; color: #111; }
.name { width: 100%; height: 14px; line-height: 13px; background: #f0f0f0; font-size: 10px; }
.normal { font-family: "Liberation Serif", serif; font-size: 11px; }
.h1 { font: bold 14px/30px Lato, "Open Sans", sans-serif; color: #2d5685; }
.h2 { font: bold 11px/30px Lato, "Open Sans", sans-serif; color: #4b80bd; }
.ttl { font: 24px/30px Lato, "Open Sans", sans-serif; color: #17365d; }
.play { margin-left: auto; }
.style-tools { width: 30px; display: flex; flex-direction: column; justify-content: space-between; align-items: flex-start; padding: 0 0 2px; }

/* Large ribbon buttons */
.insert { width: 158px; }
.themes { width: 56px; }
.end { width: 9px; border-right: 0; }
.bigs { display: flex; justify-content: space-around; height: 52px; align-items: flex-end; }
.big { flex-direction: column; gap: 4px; line-height: 16px; height: 52px; color: #000; justify-content: flex-end; white-space: nowrap; }
.big > span { display: flex; align-items: center; gap: 5px; margin-left: 5px; }
.themes .big > span { gap: 2px; margin-left: 0; }

/* Rulers and document area */
.work { flex: 1; min-height: 0; display: grid; grid-template-columns: 22px 1fr 14px; grid-template-rows: 26px 1fr; }
.tabstop { width: 16px; height: 16px; margin: 5px 0 0 4px; border: 1px solid #888; border-radius: 4px; background: #fff; }
.hruler { display: flex; justify-content: center; overflow: hidden; padding-right: 2px; }
.nums { font: 10px "Open Sans", sans-serif; fill: #333; }
.vruler { padding: 12px 0 0 4px; overflow: hidden; }
.canvas { overflow: hidden; display: flex; justify-content: center; align-items: flex-start; padding: 13px 2px 0 0; border: 3px solid #989eaa; border-bottom: 0; background: linear-gradient(#c0c4cf, #a5aab7 55%, #9aa0ac 85%); }
.page { position: relative; width: 812px; height: 1060px; padding: 96px 72px 0 70px; background: #fff; border: 2px solid #8f95a2; }
.move { position: absolute; left: 56px; top: 35px; width: 13px; height: 13px; border: 1px solid #6b91cd; background: #eef4fd; }
.labels { display: grid; grid-template-columns: 1fr 1fr; grid-auto-rows: 190px; }
.label { text-align: center; font: 12px/15px "DejaVu Serif", serif; color: #000; white-space: nowrap; }
.brand { font: 300 37px/60px Lato, "Open Sans", sans-serif; height: 88px; padding-top: 8px; }
.label u { text-decoration: underline wavy #16863a 1px; text-underline-offset: 0; text-decoration-skip-ink: none; }
.label .brand u { text-underline-offset: 5px; }

.vscroll { grid-column: 3; grid-row: 1 / 3; display: flex; flex-direction: column; background: #f6f6f6; border-left: 1px solid #ddd; }
.split { height: 12px; border: 1px solid #2770b9; background: linear-gradient(#9cc9f0 4px, #2770b9 4px, #2770b9 6px, #9cc9f0 6px); }
.track { flex: 1; padding: 2px 1px 0 3px; }
.thumb { height: 51%; border-radius: 5px; background: #c0c0c0; }
.pager { height: 47px; display: flex; flex-direction: column; border: 1px solid #aaa; border-radius: 5px; background: #eee; }
.pager button { flex: 1; border-bottom: 1px solid #bbb; }
.pager button:last-child { border-bottom: 0; }
.work .tabstop { grid-column: 1; grid-row: 1; }
.work .hruler { grid-column: 2; grid-row: 1; }
.work .vruler { grid-column: 1; grid-row: 2; }
.work .canvas { grid-column: 2; grid-row: 2; }

/* Footer */
.footer { height: 33px; display: flex; border-top: 1px solid #ccc; }
.views { width: 178px; padding: 4px 3px; border-right: 1px solid #bbb; }
.viewset { display: flex; height: 24px; border: 1px solid #555; border-radius: 4px; background: linear-gradient(#fff, #d8d8d8); overflow: hidden; }
.viewset button { flex: 1; border-left: 1px solid #777; }
.viewset button:first-child { border-left: 0; }
.viewset .on { background: #4c4f54; }
.status { flex: 1; display: flex; flex-direction: column; }
.hscroll { height: 15px; background: linear-gradient(#f0f0f0, #fff); }
.cells { flex: 1; display: flex; border-top: 1px solid #999; background: linear-gradient(#fff, #dcdfe2); }
.cell { display: flex; align-items: center; justify-content: space-between; padding: 0 7px 2px; border-right: 1px solid #999; white-space: nowrap; }
.layout { width: 121px; padding: 0 5px 2px; }
.sec { width: 49px; padding: 0 5px 2px; }
.pages { width: 119px; padding: 0 25px 2px 9px; }
.words { width: 135px; padding: 0 19px 2px 8px; }
.spell { width: 40px; justify-content: center; }
.zoomer { margin-left: auto; display: flex; align-items: center; gap: 12px; padding-bottom: 2px; }
.zoomer svg { margin-left: 5px; align-self: flex-end; }
.zoomer input { appearance: none; width: 100px; height: 5px; margin: 0; border: 1px solid #888; border-radius: 3px; background: #bbb; }
.zoomer input::-webkit-slider-thumb { appearance: none; width: 11px; height: 11px; border: 1px solid #777; border-radius: 50%; background: radial-gradient(#555 0 1px, #eee 2px, #ddd); }
```
